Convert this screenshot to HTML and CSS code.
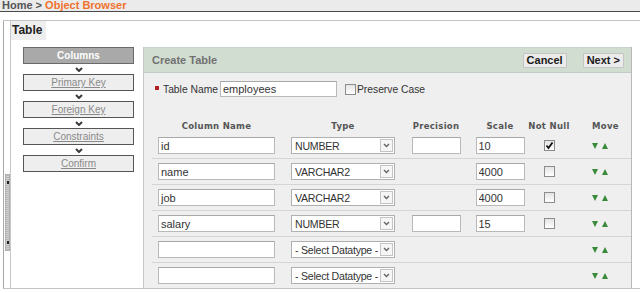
FILE: index.html
```html
<!DOCTYPE html>
<html lang="en">
  <head>
    <meta charset="UTF-8" />
    <title>Object Browser - Create Table</title>
    <link rel="stylesheet" href="styles.css">
  </head>
  <body>
    <div class="crumbs">
      <a href="#" class="home">Home</a> &gt; <span class="current">Object Browser</span>
    </div>

    <div class="page">
      <div class="splitter"><div class="handle"><i></i><i></i></div></div>

      <div class="content">
        <div class="tabs"><span class="tab">Table</span></div>

        <div class="wizard-body">
          <!-- wizard progress -->
          <div class="steps">
            <div class="step current">Columns</div>
            <div class="chev"><svg width="8" height="5" viewBox="0 0 8 5"><polyline points="1,1 4,4 7,1" fill="none" stroke="#3c3c3c" stroke-width="2"/></svg></div>
            <div class="step"><a href="#">Primary Key</a></div>
            <div class="chev"><svg width="8" height="5" viewBox="0 0 8 5"><polyline points="1,1 4,4 7,1" fill="none" stroke="#3c3c3c" stroke-width="2"/></svg></div>
            <div class="step"><a href="#">Foreign Key</a></div>
            <div class="chev"><svg width="8" height="5" viewBox="0 0 8 5"><polyline points="1,1 4,4 7,1" fill="none" stroke="#3c3c3c" stroke-width="2"/></svg></div>
            <div class="step"><a href="#">Constraints</a></div>
            <div class="chev"><svg width="8" height="5" viewBox="0 0 8 5"><polyline points="1,1 4,4 7,1" fill="none" stroke="#3c3c3c" stroke-width="2"/></svg></div>
            <div class="step"><a href="#">Confirm</a></div>
          </div>

          <div class="region">
            <div class="region-head">
              <span class="region-title">Create Table</span>
              <span class="btns">
                <button class="btn">Cancel</button>
                <button class="btn">Next &gt;</button>
              </span>
            </div>

            <div class="region-body">
              <div class="name-row">
                <span class="req"></span>
                <label class="lbl" for="tname">Table Name</label>
                <input id="tname" class="txt tname" type="text" value="employees" />
                <span class="cb"></span>
                <span class="lbl">Preserve Case</span>
              </div>

              <div class="cols">
                <div class="row head">
                  <span>Column Name</span>
                  <span>Type</span>
                  <span>Precision</span>
                  <span>Scale</span>
                  <span>Not Null</span>
                  <span class="move">Move</span>
                </div>

                <div class="row">
                  <input class="txt cname" type="text" value="id" />
                  <span class="sel"><select><option>NUMBER</option></select><span class="arrow"><svg width="7" height="5" viewBox="0 0 7 5"><polyline points="1,1 3.5,3.5 6,1" fill="none" stroke="#666" stroke-width="1.4"/></svg></span></span>
                  <input class="txt num" type="text" value="" />
                  <input class="txt num" type="text" value="10" />
                  <span class="cb checked"><svg width="9" height="9" viewBox="0 0 9 9"><polyline points="1.5,4.5 3.5,7 7.5,1.5" fill="none" stroke="#111" stroke-width="1.8"/></svg></span>
                  <span class="move"><svg width="18" height="8" viewBox="0 0 18 8"><polygon points="0,1 6,1 3,7" fill="#3a8a3a"/><polygon points="10,7 16,7 13,1" fill="#3a8a3a"/></svg></span>
                </div>

                <div class="row">
                  <input class="txt cname" type="text" value="name" />
                  <span class="sel"><select><option>VARCHAR2</option></select><span class="arrow"><svg width="7" height="5" viewBox="0 0 7 5"><polyline points="1,1 3.5,3.5 6,1" fill="none" stroke="#666" stroke-width="1.4"/></svg></span></span>
                  <span></span>
                  <input class="txt num" type="text" value="4000" />
                  <span class="cb"></span>
                  <span class="move"><svg width="18" height="8" viewBox="0 0 18 8"><polygon points="0,1 6,1 3,7" fill="#3a8a3a"/><polygon points="10,7 16,7 13,1" fill="#3a8a3a"/></svg></span>
                </div>

                <div class="row">
                  <input class="txt cname" type="text" value="job" />
                  <span class="sel"><select><option>VARCHAR2</option></select><span class="arrow"><svg width="7" height="5" viewBox="0 0 7 5"><polyline points="1,1 3.5,3.5 6,1" fill="none" stroke="#666" stroke-width="1.4"/></svg></span></span>
                  <span></span>
                  <input class="txt num" type="text" value="4000" />
                  <span class="cb"></span>
                  <span class="move"><svg width="18" height="8" viewBox="0 0 18 8"><polygon points="0,1 6,1 3,7" fill="#3a8a3a"/><polygon points="10,7 16,7 13,1" fill="#3a8a3a"/></svg></span>
                </div>

                <div class="row">
                  <input class="txt cname" type="text" value="salary" />
                  <span class="sel"><select><option>NUMBER</option></select><span class="arrow"><svg width="7" height="5" viewBox="0 0 7 5"><polyline points="1,1 3.5,3.5 6,1" fill="none" stroke="#666" stroke-width="1.4"/></svg></span></span>
                  <input class="txt num" type="text" value="" />
                  <input class="txt num" type="text" value="15" />
                  <span class="cb"></span>
                  <span class="move"><svg width="18" height="8" viewBox="0 0 18 8"><polygon points="0,1 6,1 3,7" fill="#3a8a3a"/><polygon points="10,7 16,7 13,1" fill="#3a8a3a"/></svg></span>
                </div>

                <div class="row">
                  <input class="txt cname" type="text" value="" />
                  <span class="sel"><select><option>- Select Datatype -</option></select><span class="arrow"><svg width="7" height="5" viewBox="0 0 7 5"><polyline points="1,1 3.5,3.5 6,1" fill="none" stroke="#666" stroke-width="1.4"/></svg></span></span>
                  <span></span>
                  <span></span>
                  <span></span>
                  <span class="move"><svg width="18" height="8" viewBox="0 0 18 8"><polygon points="0,1 6,1 3,7" fill="#3a8a3a"/><polygon points="10,7 16,7 13,1" fill="#3a8a3a"/></svg></span>
                </div>

                <div class="row">
                  <input class="txt cname" type="text" value="" />
                  <span class="sel"><select><option>- Select Datatype -</option></select><span class="arrow"><svg width="7" height="5" viewBox="0 0 7 5"><polyline points="1,1 3.5,3.5 6,1" fill="none" stroke="#666" stroke-width="1.4"/></svg></span></span>
                  <span></span>
                  <span></span>
                  <span></span>
                  <span class="move"><svg width="18" height="8" viewBox="0 0 18 8"><polygon points="0,1 6,1 3,7" fill="#3a8a3a"/><polygon points="10,7 16,7 13,1" fill="#3a8a3a"/></svg></span>
                </div>
              </div>
            </div>
          </div>
        </div>
      </div>
    </div>
  </body>
</html>
```

FILE: styles.css
```css
body {
  margin: 0;
  font-family: "Liberation Sans", Arial, sans-serif;
  font-size: 11px;
  color: #333;
  background: #fff;
  overflow: hidden;
}

/* breadcrumb */
.crumbs {
  height: 11px;
  line-height: 11px;
  padding-left: 2px;
  background: #ebebeb;
  border-bottom: 1px solid #4a4a4a;
  font-weight: bold;
  color: #555;
  white-space: nowrap;
}
.crumbs .home {
  color: #555;
  text-decoration: none;
}
.crumbs .current {
  color: #f0722e;
}

/* page frame */
.page {
  display: flex;
  margin: 8px 0 0 3px;
  height: 267px;
  border-top: 1px solid #c4c4c4;
  border-bottom: 1px solid #c4c4c4;
  overflow: hidden;
}
.splitter {
  width: 6px;
  border-left: 1px solid #a8a8a8;
  border-right: 1px solid #c8c8c8;
  padding-top: 153px;
  flex-shrink: 0;
}
.handle {
  width: 5px;
  height: 77px;
  margin-left: 1px;
  background: repeating-linear-gradient(#b8b8b8 0 1px, #d0d0d0 1px 2px);
  border: 1px solid #b0b0b0;
  box-sizing: border-box;
  display: flex;
  flex-direction: column;
  justify-content: space-between;
  align-items: center;
  padding: 6px 0;
}
.handle i {
  width: 2px;
  height: 3px;
  background: #222;
}
.content {
  flex: 1;
  min-width: 0;
}

.tabs {
  height: 19px;
}
.tab {
  display: inline-block;
  height: 19px;
  line-height: 19px;
  padding: 0 4px 0 1px;
  background: #eee;
  font-size: 12px;
  font-weight: bold;
  color: #222;
}

.wizard-body {
  display: flex;
  align-items: flex-start;
  padding: 7px 0 0 12px;
}

/* wizard steps */
.steps {
  width: 111px;
  flex-shrink: 0;
}
.step {
  height: 15px;
  line-height: 15px;
  border: 1px solid #555;
  background: #eee;
  text-align: center;
  font-size: 10px;
}
.step a {
  color: #8a8a8a;
}
.step.current {
  background: #a9a9a9;
  border-color: #6a6a6a;
  color: #fff;
  font-weight: bold;
}
.chev {
  height: 10px;
  display: flex;
  justify-content: center;
  align-items: center;
}
.chev svg {
  display: block;
}

/* region */
.region {
  width: 487px;
  margin-left: 9px;
  height: 260px;
  border-left: 1px solid #c6c6c6;
  border-right: 1px solid #b8b8b8;
  background: #efefef;
}
.region-head {
  height: 24px;
  display: flex;
  align-items: center;
  justify-content: space-between;
  padding: 0 7px 0 8px;
  background: #d2ddd2;
  border-top: 1px solid #c9d3c9;
  border-bottom: 1px solid #c2ccc2;
}
.region-title {
  font-weight: bold;
  color: #707070;
}
.btns {
  display: flex;
  gap: 16px;
  margin-top: 1px;
}
.btn {
  height: 15px;
  padding: 0 3px;
  font-family: "Liberation Sans", Arial, sans-serif;
  font-size: 11px;
  font-weight: bold;
  color: #1a1a1a;
  background: #ebebeb;
  border: 1px solid #c4c4c4;
  border-radius: 1px;
  line-height: 13px;
}

.region-body {
  padding: 8px 0 0 8px;
}
.name-row {
  display: flex;
  align-items: center;
  height: 16px;
  padding-left: 3px;
}
.req {
  width: 4px;
  height: 4px;
  background: #b02020;
  margin: 0 4px 2px 0;
}
.lbl {
  font-size: 10.3px;
  color: #333;
}
.txt {
  box-sizing: border-box;
  height: 17px;
  padding: 0 2px;
  font-family: "Liberation Sans", Arial, sans-serif;
  font-size: 11px;
  color: #333;
  background: #fff;
  border: 1px solid #b9b9b9;
  border-top-color: #a8a8a8;
  outline: none;
}
.tname {
  width: 117px;
  height: 16px;
  margin: 0 8px 0 2px;
}
.name-row .cb {
  margin-right: 1px;
}

/* column grid */
.cols {
  margin-top: 21px;
  width: 479px;
}
.row {
  display: grid;
  grid-template-columns: 129px 124px 62px 66px 32px 66px;
  align-items: center;
  justify-items: center;
  height: 25px;
  border-bottom: 1px solid #d5d5d5;
}
.row.head {
  height: 15px;
  border-bottom: none;
  font-family: "DejaVu Sans", Verdana, sans-serif;
  font-size: 8.5px;
  font-weight: bold;
  color: #555;
  letter-spacing: 0.3px;
  white-space: nowrap;
}
.row .move {
  justify-self: start;
  margin-left: 27px;
}
.row .move svg {
  display: block;
}
.cname {
  width: 117px;
}
.num {
  width: 49px;
}

.sel {
  position: relative;
  width: 104px;
  height: 17px;
}
.sel select {
  appearance: none;
  -webkit-appearance: none;
  box-sizing: border-box;
  width: 104px;
  height: 17px;
  padding: 0 0 0 3px;
  font-family: "Liberation Sans", Arial, sans-serif;
  font-size: 10.6px;
  letter-spacing: -0.25px;
  color: #333;
  background: #fff;
  border: 1px solid #b0b0b0;
  border-radius: 0;
  outline: none;
}
.sel .arrow {
  position: absolute;
  right: 2px;
  top: 2px;
  width: 11px;
  height: 11px;
  border: 1px solid #c4c4c4;
  background: #f6f6f6;
  display: flex;
  align-items: center;
  justify-content: center;
}

.cb {
  box-sizing: border-box;
  width: 11px;
  height: 11px;
  border: 1px solid #8c8c8c;
  background: linear-gradient(#e4e4e4, #fff);
  display: flex;
  align-items: center;
  justify-content: center;
}
.cb svg {
  display: block;
}
```
